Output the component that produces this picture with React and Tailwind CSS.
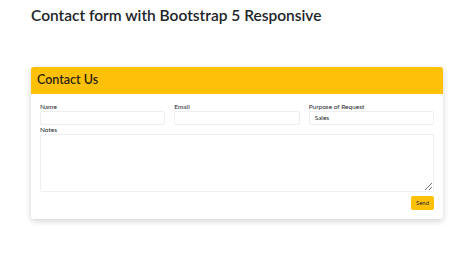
import React from "react";

const font = { fontFamily: 'Lato, "Noto Sans", sans-serif' };

function Field({ label, children }) {
  return (
    <div className="flex flex-col">
      <label className="h-[8px] text-[6.5px] leading-[8px] text-[#212529]">{label}</label>
      {children}
    </div>
  );
}

export default function App() {
  return (
    <div style={font} className="w-[474px] h-[266px] bg-white px-[31px] pt-[4px] text-[#212529]">
      <h1 className="text-[15.5px] leading-[22px] font-semibold">
        Contact form with Bootstrap 5 Responsive
      </h1>

      <div className="mt-[41px] rounded-[3px] bg-white shadow-[0_2px_6px_rgba(0,0,0,0.18)] overflow-hidden">
        <div className="h-[27px] bg-[#ffc107] px-[6px] flex items-center">
          <h2 className="text-[12.5px] font-semibold leading-none text-[#2a2410]">Contact Us</h2>
        </div>

        <div className="px-[9px] pt-[9px] pb-[9px]">
          <div className="grid grid-cols-3 gap-x-[9px]">
            <Field label="Name">
              <input className="h-[14px] rounded-[2px] border border-[#eceef0] outline-none" />
            </Field>
            <Field label="Email">
              <input className="h-[14px] rounded-[2px] border border-[#eceef0] outline-none" />
            </Field>
            <Field label="Purpose of Request">
              <div className="h-[14px] rounded-[2px] border border-[#eceef0] pl-[5px] text-[6.5px] leading-[12px]">
                Sales
              </div>
            </Field>
          </div>

          <div className="mt-[1px]">
            <Field label="Notes">
              <textarea className="h-[58px] rounded-[2px] border border-[#eceef0] outline-none resize-y opacity-90" />
            </Field>
          </div>

          <div className="mt-[4px] flex justify-end">
            <button className="h-[14px] w-[23px] rounded-[2px] bg-[#ffc107] text-[6px] leading-none text-[#212529]">
              Send
            </button>
          </div>
        </div>
      </div>
    </div>
  );
}
